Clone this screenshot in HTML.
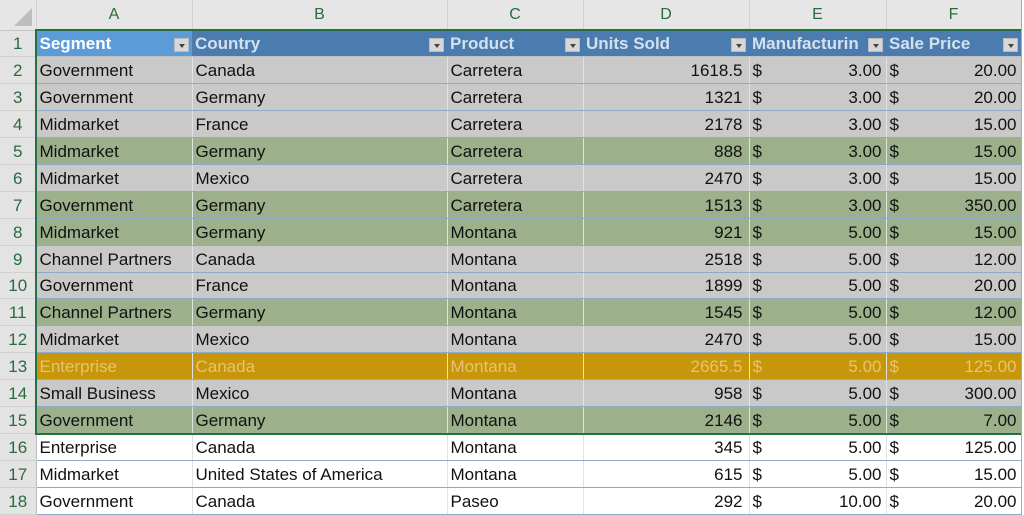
<!DOCTYPE html>
<html><head><meta charset="utf-8"><style>
*{margin:0;padding:0;box-sizing:border-box}
body{width:1024px;height:514px;overflow:hidden;background:#fff;font-family:"Liberation Sans",sans-serif;position:relative}
table{border-collapse:collapse;table-layout:fixed;position:absolute;left:0;top:0}
td{height:26.9px;font-size:17px;color:#111;white-space:nowrap;overflow:hidden;padding:2px 3px 0 3px;border-bottom:1px solid #8eaacb;border-right:1px solid #e2e2e2;position:relative}
tr.ch td{height:30px;background:#e6e6e6;color:#2a6b3e;text-align:center;font-size:16px;border-bottom:1px solid #c6c6c6;border-right:1px solid #d0d0d0;padding:0}
td.rh{background:#e3e3e3;color:#2a6b3e;text-align:center;padding:2px 0 0 0;border-right:1px solid #bdbdbd;border-bottom:1px solid #d0d0d0}
tr.h td:not(.rh){background:#4a7cb0;color:#d6e0ec;font-weight:bold;border-right:none;border-bottom:1px solid #c0c0c0}
tr.h td.a1{background:#5a9bd8;color:#fff}
.f{position:absolute;right:3px;top:7px;width:15px;height:14px;background:#d8d8d8;border:1px solid #bbb}
.f:after{content:"";position:absolute;left:4px;top:5px;border-left:3px solid transparent;border-right:3px solid transparent;border-top:4px solid #444}
tr.g td:not(.rh){background:#c9c9c9}
tr.v td:not(.rh){background:#9bb08b}
tr.o td:not(.rh){background:#c8960a;color:#e7c46e}
.r{text-align:right;padding-right:6px}
.s{padding-right:4px}
.s span{float:left}
#sel{position:absolute;left:35px;top:29px;width:988px;height:406px;border:2px solid #217346;pointer-events:none}
#tri{position:absolute;left:14px;top:8px;width:0;height:0;border-left:18px solid transparent;border-bottom:18px solid #bdbdbd}
#edge{position:absolute;left:1021px;top:0;width:3px;height:514px;background:#fff;border-left:1px solid #aaa}
</style></head><body>
<table>
<colgroup><col style="width:36px"><col style="width:156px"><col style="width:255px"><col style="width:136px"><col style="width:166px"><col style="width:137px"><col style="width:135px"></colgroup>
<tr class="ch"><td></td><td>A</td><td>B</td><td>C</td><td>D</td><td>E</td><td>F</td></tr>
<tr class="h"><td class="rh">1</td><td class="a1">Segment<i class="f"></i></td><td>Country<i class="f"></i></td><td>Product<i class="f"></i></td><td>Units Sold<i class="f"></i></td><td>Manufacturin<i class="f"></i></td><td>Sale Price<i class="f"></i></td></tr>
<tr class="g"><td class="rh">2</td><td>Government</td><td>Canada</td><td>Carretera</td><td class="r">1618.5</td><td class="s r"><span>$</span>3.00</td><td class="s r"><span>$</span>20.00</td></tr>
<tr class="g"><td class="rh">3</td><td>Government</td><td>Germany</td><td>Carretera</td><td class="r">1321</td><td class="s r"><span>$</span>3.00</td><td class="s r"><span>$</span>20.00</td></tr>
<tr class="g"><td class="rh">4</td><td>Midmarket</td><td>France</td><td>Carretera</td><td class="r">2178</td><td class="s r"><span>$</span>3.00</td><td class="s r"><span>$</span>15.00</td></tr>
<tr class="v"><td class="rh">5</td><td>Midmarket</td><td>Germany</td><td>Carretera</td><td class="r">888</td><td class="s r"><span>$</span>3.00</td><td class="s r"><span>$</span>15.00</td></tr>
<tr class="g"><td class="rh">6</td><td>Midmarket</td><td>Mexico</td><td>Carretera</td><td class="r">2470</td><td class="s r"><span>$</span>3.00</td><td class="s r"><span>$</span>15.00</td></tr>
<tr class="v"><td class="rh">7</td><td>Government</td><td>Germany</td><td>Carretera</td><td class="r">1513</td><td class="s r"><span>$</span>3.00</td><td class="s r"><span>$</span>350.00</td></tr>
<tr class="v"><td class="rh">8</td><td>Midmarket</td><td>Germany</td><td>Montana</td><td class="r">921</td><td class="s r"><span>$</span>5.00</td><td class="s r"><span>$</span>15.00</td></tr>
<tr class="g"><td class="rh">9</td><td>Channel Partners</td><td>Canada</td><td>Montana</td><td class="r">2518</td><td class="s r"><span>$</span>5.00</td><td class="s r"><span>$</span>12.00</td></tr>
<tr class="g"><td class="rh">10</td><td>Government</td><td>France</td><td>Montana</td><td class="r">1899</td><td class="s r"><span>$</span>5.00</td><td class="s r"><span>$</span>20.00</td></tr>
<tr class="v"><td class="rh">11</td><td>Channel Partners</td><td>Germany</td><td>Montana</td><td class="r">1545</td><td class="s r"><span>$</span>5.00</td><td class="s r"><span>$</span>12.00</td></tr>
<tr class="g"><td class="rh">12</td><td>Midmarket</td><td>Mexico</td><td>Montana</td><td class="r">2470</td><td class="s r"><span>$</span>5.00</td><td class="s r"><span>$</span>15.00</td></tr>
<tr class="o"><td class="rh">13</td><td>Enterprise</td><td>Canada</td><td>Montana</td><td class="r">2665.5</td><td class="s r"><span>$</span>5.00</td><td class="s r"><span>$</span>125.00</td></tr>
<tr class="g"><td class="rh">14</td><td>Small Business</td><td>Mexico</td><td>Montana</td><td class="r">958</td><td class="s r"><span>$</span>5.00</td><td class="s r"><span>$</span>300.00</td></tr>
<tr class="v"><td class="rh">15</td><td>Government</td><td>Germany</td><td>Montana</td><td class="r">2146</td><td class="s r"><span>$</span>5.00</td><td class="s r"><span>$</span>7.00</td></tr>
<tr><td class="rh">16</td><td>Enterprise</td><td>Canada</td><td>Montana</td><td class="r">345</td><td class="s r"><span>$</span>5.00</td><td class="s r"><span>$</span>125.00</td></tr>
<tr><td class="rh">17</td><td>Midmarket</td><td>United States of America</td><td>Montana</td><td class="r">615</td><td class="s r"><span>$</span>5.00</td><td class="s r"><span>$</span>15.00</td></tr>
<tr><td class="rh">18</td><td>Government</td><td>Canada</td><td>Paseo</td><td class="r">292</td><td class="s r"><span>$</span>10.00</td><td class="s r"><span>$</span>20.00</td></tr>
</table>
<div id="tri"></div>
<div id="sel"></div>
<div id="edge"></div>
</body></html>
